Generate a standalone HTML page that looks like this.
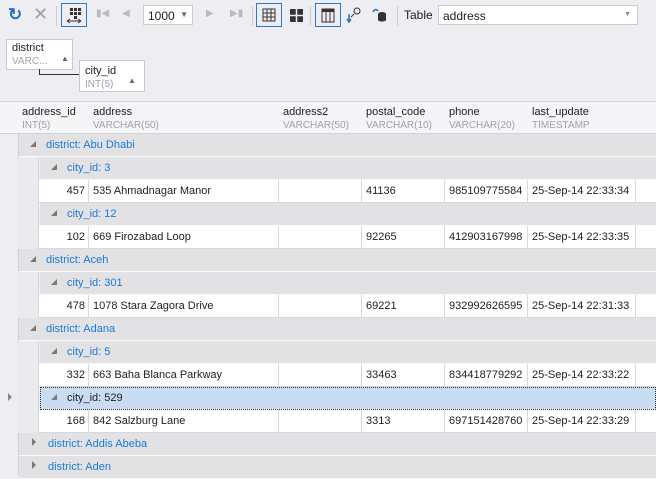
<!DOCTYPE html><html><head><style>
*{margin:0;padding:0;box-sizing:border-box}
body{width:656px;height:475px;overflow:hidden;background:#eeeef2;font-family:"Liberation Sans",sans-serif;font-size:11px;color:#1e1e1e;position:relative}
.a{position:absolute;white-space:nowrap}
.tb{border:1px solid #2a7bd0}
.hd{position:absolute;top:101px;height:33px;border-right:1px solid #d4d4d8;border-top:1px solid #d4d4d8;border-bottom:1px solid #d4d4d8;padding:4px 0 0 4px;line-height:13px;background:#f5f5f7;white-space:nowrap;overflow:hidden}
.hd i{font-style:normal;color:#a0a0a8;font-size:10px}
.g{position:absolute;height:23px;background:#e2e2e4;border-bottom:1px solid #fafafa;color:#1a7ad4;line-height:22px;right:0;white-space:nowrap}
.g b{font-weight:normal;display:inline-block;width:0;height:0;border-left:6px solid transparent;border-bottom:6px solid #7a7a7a;margin-right:10px;vertical-align:1px}
.g b.c{border:4px solid transparent;border-left:4px solid #7a7a7a;border-right:0;margin-right:12px;margin-left:2px}
.r{position:absolute;left:39px;right:0;height:23px;background:#fff;border-bottom:1px solid #d8d8dc;line-height:22px}
.r span{position:absolute;top:0;height:22px;border-right:1px solid #d8d8dc;padding-left:4px;white-space:nowrap;overflow:hidden}
.gut{position:absolute;left:18px;width:21px;background:#ebebef;border-right:1px solid #d8d8dc}
</style></head><body>
<div class="a" style="left:8px;top:5px;color:#2a6fc0;font-size:17px;font-weight:bold">↻</div>
<div class="a" style="left:33px;top:4px;color:#a0a0a0;font-size:18px">✕</div>
<div class="a" style="left:56px;top:6px;width:1px;height:20px;background:#ccc"></div>
<div class="a tb" style="left:61px;top:3px;width:26px;height:24px"><svg width="24" height="22"><g fill="#333"><rect x="8" y="4" width="3" height="3"/><rect x="12" y="4" width="3" height="3"/><rect x="16" y="4" width="3" height="3"/><rect x="8" y="8" width="3" height="3"/><rect x="12" y="8" width="3" height="3"/><rect x="16" y="8" width="3" height="3"/><rect x="12" y="12" width="3" height="3"/></g><path d="M5 17h14M5 17l3-2M5 17l3 2M19 17l-3-2M19 17l-3 2" stroke="#333" fill="none"/></svg></div>
<div class="a" style="left:96px;top:8px;color:#bbb;font-size:10px">▮◀</div>
<div class="a" style="left:122px;top:8px;color:#bbb;font-size:10px">◀</div>
<div class="a" style="left:143px;top:5px;width:50px;height:20px;background:#fff;border:1px solid #ccc;padding:3px 4px;font-size:12px">1000<span style="position:absolute;right:4px;top:4px;color:#666;font-size:8px">▼</span></div>
<div class="a" style="left:206px;top:8px;color:#bbb;font-size:10px">▶</div>
<div class="a" style="left:230px;top:8px;color:#bbb;font-size:10px">▶▮</div>
<div class="a" style="left:252px;top:6px;width:1px;height:20px;background:#ccc"></div>
<div class="a tb" style="left:256px;top:3px;width:26px;height:24px"><svg width="24" height="22"><path d="M6 5h12v12H6zM6 9h12M6 13h12M10 5v12M14 5v12" stroke="#333" fill="none"/></svg></div>
<div class="a" style="left:285px;top:4px;width:26px;height:24px"><svg width="24" height="22"><path d="M5 5h13v13H5z" fill="#333"/><path d="M11.5 5v13M5 11.5h13" stroke="#eee" stroke-width="1.5"/></svg></div>
<div class="a" style="left:310px;top:6px;width:1px;height:20px;background:#ccc"></div>
<div class="a tb" style="left:315px;top:3px;width:26px;height:24px"><svg width="24" height="22"><path d="M6 5h12v13H6zM10 5v13M14 5v13" stroke="#333" fill="none"/><path d="M6 5h12v3H6z" fill="#333"/></svg></div>
<div class="a" style="left:345px;top:6px"><svg width="18" height="18"><circle cx="12" cy="5" r="3" stroke="#333" fill="none"/><path d="M9 8l-3 3" stroke="#333"/><path d="M4 8v7M2 13l2 3 2-3" stroke="#2a6fc0" fill="none" stroke-width="1.5"/></svg></div>
<div class="a" style="left:371px;top:6px"><svg width="18" height="18"><ellipse cx="11" cy="8" rx="4" ry="2" fill="#333"/><path d="M7 8v6c0 2 8 2 8 0V8" fill="#333"/><path d="M2 6c1-3 4-3 5-1" stroke="#2a6fc0" fill="none" stroke-width="1.5"/></svg></div>
<div class="a" style="left:397px;top:6px;width:1px;height:20px;background:#ccc"></div>
<div class="a" style="left:404px;top:8px;font-size:12px">Table</div>
<div class="a" style="left:438px;top:5px;width:200px;height:20px;background:#fff;border:1px solid #ccc;padding:3px 4px;font-size:12px">address<span style="position:absolute;right:6px;top:5px;color:#888;font-size:7px">▼</span></div>
<div class="a" style="left:6px;top:39px;width:67px;height:31px;background:#fff;border:1px solid #c8c8d0;padding:2px 5px;line-height:13px">district<br><span style="color:#a0a0a8;font-size:10px">VARC...</span><span style="position:absolute;left:54px;top:12px;font-size:8px;color:#666">▲</span></div>
<div class="a" style="left:39px;top:69px;width:1px;height:6px;background:#333"></div>
<div class="a" style="left:39px;top:74px;width:40px;height:1px;background:#333"></div>
<div class="a" style="left:79px;top:60px;width:66px;height:32px;background:#fff;border:1px solid #c8c8d0;padding:4px 5px;line-height:13px">city_id<br><span style="color:#a0a0a8;font-size:10px">INT(5)</span><span style="position:absolute;left:48px;top:13px;font-size:8px;color:#666">▲</span></div>
<div class="hd" style="left:0;width:19px"></div>
<div class="hd" style="left:18px;width:72px">address_id<br><i>INT(5)</i></div>
<div class="hd" style="left:89px;width:191px">address<br><i>VARCHAR(50)</i></div>
<div class="hd" style="left:279px;width:84px">address2<br><i>VARCHAR(50)</i></div>
<div class="hd" style="left:362px;width:84px">postal_code<br><i>VARCHAR(10)</i></div>
<div class="hd" style="left:445px;width:84px">phone<br><i>VARCHAR(20)</i></div>
<div class="hd" style="left:528px;width:109px">last_update<br><i>TIMESTAMP</i></div>
<div class="hd" style="left:636px;width:21px;border-right:0"></div>
<div class="a" style="left:18px;top:134px;width:1px;height:341px;background:#d0d0d4"></div>
<div class="gut" style="top:157px;height:92px"></div>
<div class="gut" style="top:272px;height:46px"></div>
<div class="gut" style="top:341px;height:92px"></div>
<div class="g" style="left:19px;top:134px;padding-left:11px"><b></b>district: Abu Dhabi</div>
<div class="g" style="left:40px;top:157px;padding-left:11px"><b></b>city_id: 3</div>
<div class="r" style="top:180px"><span style="left:0;width:50px;text-align:right;padding-right:3px">457</span><span style="left:50px;width:190px">535 Ahmadnagar Manor</span><span style="left:240px;width:83px"></span><span style="left:323px;width:83px">41136</span><span style="left:406px;width:83px">985109775584</span><span style="left:489px;width:108px">25-Sep-14 22:33:34</span></div>
<div class="g" style="left:40px;top:203px;padding-left:11px"><b></b>city_id: 12</div>
<div class="r" style="top:226px"><span style="left:0;width:50px;text-align:right;padding-right:3px">102</span><span style="left:50px;width:190px">669 Firozabad Loop</span><span style="left:240px;width:83px"></span><span style="left:323px;width:83px">92265</span><span style="left:406px;width:83px">412903167998</span><span style="left:489px;width:108px">25-Sep-14 22:33:35</span></div>
<div class="g" style="left:19px;top:249px;padding-left:11px"><b></b>district: Aceh</div>
<div class="g" style="left:40px;top:272px;padding-left:11px"><b></b>city_id: 301</div>
<div class="r" style="top:295px"><span style="left:0;width:50px;text-align:right;padding-right:3px">478</span><span style="left:50px;width:190px">1078 Stara Zagora Drive</span><span style="left:240px;width:83px"></span><span style="left:323px;width:83px">69221</span><span style="left:406px;width:83px">932992626595</span><span style="left:489px;width:108px">25-Sep-14 22:31:33</span></div>
<div class="g" style="left:19px;top:318px;padding-left:11px"><b></b>district: Adana</div>
<div class="g" style="left:40px;top:341px;padding-left:11px"><b></b>city_id: 5</div>
<div class="r" style="top:364px"><span style="left:0;width:50px;text-align:right;padding-right:3px">332</span><span style="left:50px;width:190px">663 Baha Blanca Parkway</span><span style="left:240px;width:83px"></span><span style="left:323px;width:83px">33463</span><span style="left:406px;width:83px">834418779292</span><span style="left:489px;width:108px">25-Sep-14 22:33:22</span></div>
<div class="g" style="left:40px;top:387px;padding-left:11px;background:#c9ddf2;color:#1e1e1e;outline:1px dotted #333;outline-offset:-1px"><b></b>city_id: 529</div>
<div class="a" style="left:8px;top:393px;border:4px solid transparent;border-left:4px solid #888;border-right:0"></div>
<div class="r" style="top:410px"><span style="left:0;width:50px;text-align:right;padding-right:3px">168</span><span style="left:50px;width:190px">842 Salzburg Lane</span><span style="left:240px;width:83px"></span><span style="left:323px;width:83px">3313</span><span style="left:406px;width:83px">697151428760</span><span style="left:489px;width:108px">25-Sep-14 22:33:29</span></div>
<div class="g" style="left:19px;top:433px;padding-left:11px"><b class="c"></b>district: Addis Abeba</div>
<div class="g" style="left:19px;top:456px;padding-left:11px"><b class="c"></b>district: Aden</div>
</body></html>
